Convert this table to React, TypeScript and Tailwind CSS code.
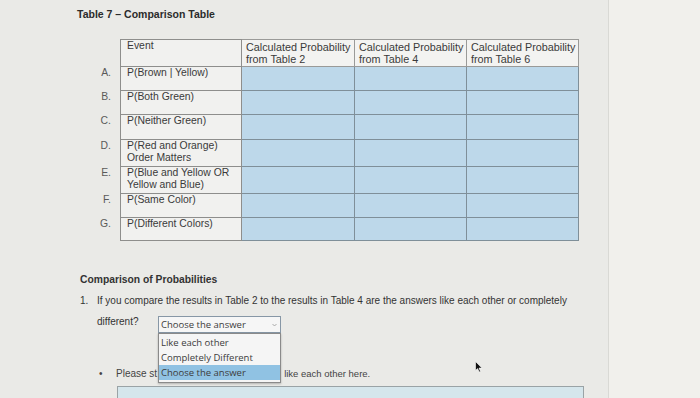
import React from 'react';

const rows = [
  { letter: 'A.', lines: ['P(Brown | Yellow)'], h: 'h-[24px]' },
  { letter: 'B.', lines: ['P(Both Green)'], h: 'h-[24px]' },
  { letter: 'C.', lines: ['P(Neither Green)'], h: 'h-[25px]' },
  { letter: 'D.', lines: ['P(Red and Orange)', 'Order Matters'], h: 'h-[27px]' },
  { letter: 'E.', lines: ['P(Blue and Yellow OR', 'Yellow and Blue)'], h: 'h-[27px]' },
  { letter: 'F.', lines: ['P(Same Color)'], h: 'h-[24px]' },
  { letter: 'G.', lines: ['P(Different Colors)'], h: 'h-[23px]' },
];

const sources = ['from Table 2', 'from Table 4', 'from Table 6'];

const ComparisonTable: React.FC = () => {
  return (
    <table className="ml-[23px] mt-[17px] border-collapse text-[10.4px] leading-[12px] text-[#3a3a3a]">
      <tbody>
        <tr className="h-[27px]">
          <td className="w-[20px]" />
          <td className="w-[121px] border border-[#8e8e8c] bg-[#f1f1ef] pl-[6px] align-top">Event</td>
          {sources.map((s, i) => (
            <td
              key={i}
              className={`${i === 0 ? 'w-[113px]' : 'w-[112px]'} border border-[#9a9a98] bg-[#f3f3f1] pl-[4px] pt-[1px] align-top text-[10.8px]`}
            >
              <div>Calculated Probability</div>
              <div>{s}</div>
            </td>
          ))}
        </tr>
        {rows.map((r) => (
          <tr key={r.letter} className={r.h}>
            <td className="pr-[9px] text-right align-top text-[#5a5a5a]">{r.letter}</td>
            <td className="border border-[#8e8e8c] bg-[#f1f1ef] pl-[6px] align-top">
              {r.lines.map((l, i) => (
                <div key={i}>{l}</div>
              ))}
            </td>
            {sources.map((s) => (
              <td key={s} className="border border-[#7f8f99] bg-[#bdd8ea]" />
            ))}
          </tr>
        ))}
      </tbody>
    </table>
  );
};

const AnswerSelect: React.FC = () => {
  return (
    <div className="relative mt-[1px] h-[17px] w-[123px] border border-[#8797a6] bg-[#f6f6f6]">
      <div className="flex h-full items-center justify-between pl-[2px] pr-[3px] font-['Open_Sans',sans-serif] text-[9.5px] text-[#3c3c3c]">
        <span>Choose the answer</span>
        <svg width="5" height="4" viewBox="0 0 5 4" className="text-[#9a9a9a]">
          <path d="M0.5 1 L2.5 3 L4.5 1" fill="none" stroke="currentColor" strokeWidth="0.8" />
        </svg>
      </div>
      {/* open option list */}
      <div className="absolute left-[-1px] top-[16px] z-10 w-[123px] border border-[#8a8a8a] bg-[#f5f5f5] pb-[2px] pt-[1px] font-['Open_Sans',sans-serif] text-[9.5px] leading-[15px] text-[#3c3c3c] shadow-[0_1px_2px_rgba(0,0,0,0.25)]">
        <div className="pl-[2px]">Like each other</div>
        <div className="pl-[2px]">Completely Different</div>
        <div className="bg-[#90c2e3] pl-[2px]">Choose the answer</div>
      </div>
    </div>
  );
};

export default function App() {
  return (
    <div className="relative flex h-[398px] w-[700px] overflow-hidden bg-[#eaeae7] font-['Liberation_Sans',Arial,sans-serif]">
      <div className="w-[608px] shrink-0 pt-[6px]">
        <h1 className="pl-[77px] text-[10.5px] font-bold leading-[16px] text-[#2b2b2b]">
          Table 7 – Comparison Table
        </h1>

        <div className="pl-[77px]">
          <ComparisonTable />
        </div>

        <div className="pl-[80px] text-[#333]">
          <h2 className="mt-[32px] text-[10.3px] font-bold leading-[14px]">Comparison of Probabilities</h2>

          <div className="mt-[7px] flex text-[10px] leading-[14px]">
            <span className="w-[17px]">1.</span>
            <span>
              If you compare the results in Table 2 to the results in Table 4 are the answers like each other or completely
            </span>
          </div>

          <div className="mt-[7px] flex items-start pl-[17px] text-[10px] leading-[14px]">
            <span className="w-[61px]">different?</span>
            <AnswerSelect />
          </div>

          <div className="mt-[34px] flex text-[10px] leading-[14px] text-[#444]">
            <span className="w-[36px] pl-[19px]">•</span>
            <span>Please st</span>
            <span className="w-[127px]" />
            <span className="text-[9.5px]">like each other here.</span>
          </div>

          <div className="ml-[37px] mt-[5px] h-[22px] w-[467px] border border-[#9aa3a6] bg-[#d5e6ec]" />
        </div>
      </div>

      <div className="flex-1 border-l border-[#d9d9d5] bg-[#f1f0ec]" />

      {/* mouse pointer */}
      <svg className="absolute left-[475px] top-[361px]" width="8" height="12" viewBox="0 0 8 12">
        <path d="M0.5 0.5 L0.5 9.5 L2.6 7.6 L4.2 11 L5.5 10.4 L4 7.1 L7 7.1 Z" fill="#111" stroke="#fff" strokeWidth="0.6" />
      </svg>
    </div>
  );
}
